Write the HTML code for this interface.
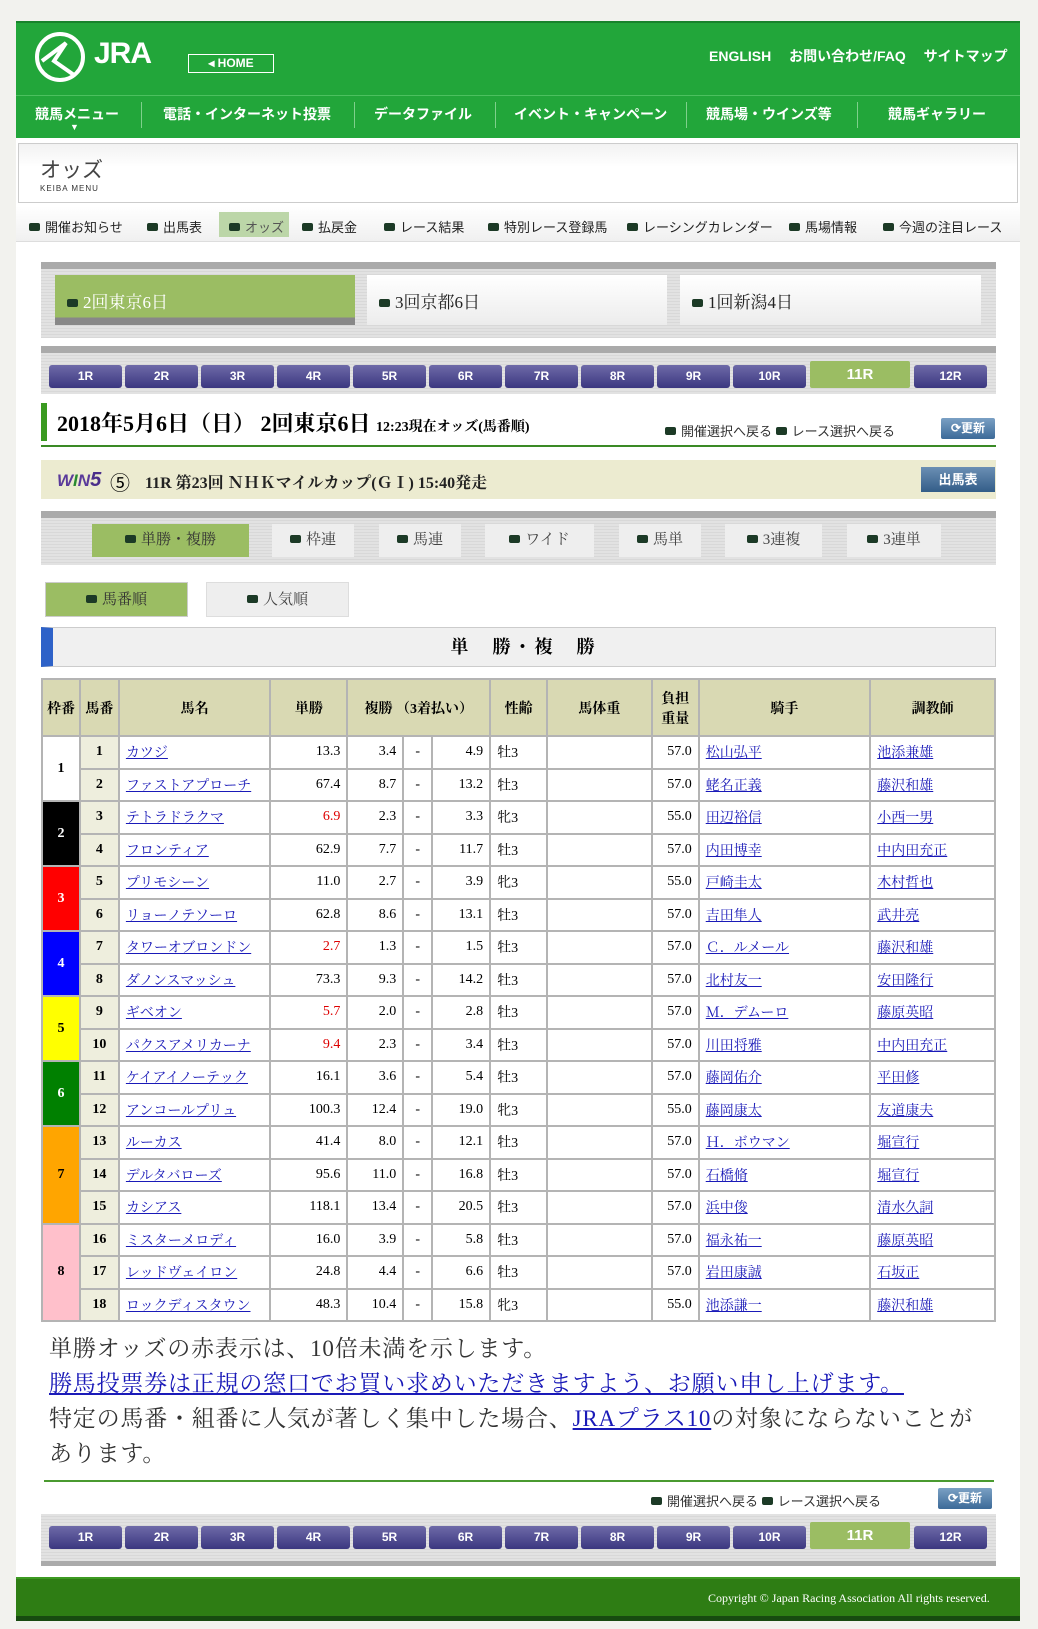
<!DOCTYPE html>
<html><head><meta charset="utf-8">
<style>
*{box-sizing:border-box;margin:0;padding:0}
body{width:1038px;height:1629px;background:#f2f2ee;position:relative;overflow:hidden;font-family:"Liberation Sans","Noto Sans CJK JP",sans-serif}
.abs{position:absolute}
.wrap{position:absolute;left:16px;top:21px;width:1004px;height:1600px;background:#fff}
.hdr{position:absolute;left:16px;top:21px;width:1004px;height:117px;background:#22a63a;border-top:2px solid #17832b}
.hdr .nav{position:absolute;top:72px;left:0;width:100%;height:40px;border-top:1px solid #4cc05f}
.nav span{position:absolute;top:8px;color:#fff;font-weight:bold;font-size:14px}
.sep{position:absolute;top:6px;width:1px;height:26px;background:#7fd08c}
.sub span{position:absolute;top:0;font-size:13px;color:#222;white-space:nowrap}
.sq{display:inline-block;width:11px;height:8px;background:#1c3a26;border-radius:2px;margin-right:5px;vertical-align:1px}
.graybar{position:absolute;left:41px;width:955px;background:repeating-linear-gradient(#e2e2e2 0,#e2e2e2 2px,#d8d8d8 2px,#d8d8d8 3px);border-top:7px solid #aaa}
.mt{position:absolute;top:275px;height:50px;background:linear-gradient(#fff,#ececec);font-family:"Liberation Serif","Noto Serif CJK JP",serif;font-size:17px;padding:13px 0 0 12px;color:#222}
.rt{position:absolute;height:23px;background:linear-gradient(#6e6aa8,#3b3780);color:#fff;font-size:12px;font-weight:bold;text-align:center;line-height:23px;border-radius:3px}
.bt{position:absolute;top:524px;height:33px;background:#eee;font-family:"Liberation Serif","Noto Serif CJK JP",serif;font-size:15px;color:#444;text-align:center;line-height:33px}
.green{background:#9bbd63 !important;color:#333}
table{position:absolute;left:41px;top:678px;width:955px;border-collapse:collapse;font-family:"Liberation Serif","Noto Serif CJK JP",serif;font-size:14px}
td,th{border:2px solid #b4b4b4;height:32.5px;padding:0 6px}
th{background:#d9d9b3;height:57px;font-size:14px}
td.n{text-align:right}
td.c{text-align:center;border-left:none;border-right:none}
td.u{background:#eeeedd;text-align:center;font-weight:bold}
td.w{text-align:center;font-weight:bold}
a{color:#1a1ab8;text-decoration:underline}
.r{color:#d00}
</style></head><body>
<div class="wrap"></div>
<div class="hdr">
 <svg class="abs" style="left:18px;top:8px" width="58" height="52" viewBox="0 0 58 52"><circle cx="26" cy="26" r="23" fill="none" stroke="#fff" stroke-width="4"/><path d="M8 30 L32 12 L20 30 L40 44" fill="none" stroke="#fff" stroke-width="4"/></svg>
 <div class="abs" style="left:78px;top:14px;color:#fff;font-size:30px;font-weight:bold;letter-spacing:-1px">JRA</div>
 <div class="abs" style="left:172px;top:31px;width:86px;height:19px;border:1px solid #fff;color:#fff;font-size:12px;font-weight:bold;text-align:center;line-height:17px">◂ HOME</div>
 <div class="abs" style="left:693px;top:23px;color:#fff;font-size:14px;font-weight:bold;word-spacing:14px">ENGLISH お問い合わせ/FAQ サイトマップ</div>
 <div class="nav">
  <span style="left:19px">競馬メニュー</span><span style="left:54px;top:26px;font-size:9px">▼</span><div class="sep" style="left:125px"></div>
  <span style="left:147px">電話・インターネット投票</span><div class="sep" style="left:338px"></div>
  <span style="left:358px">データファイル</span><div class="sep" style="left:479px"></div>
  <span style="left:498px">イベント・キャンペーン</span><div class="sep" style="left:670px"></div>
  <span style="left:690px">競馬場・ウインズ等</span><div class="sep" style="left:841px"></div>
  <span style="left:872px">競馬ギャラリー</span>
 </div>
</div>
<div class="abs" style="left:18px;top:143px;width:1000px;height:60px;border:1px solid #ccc;background:linear-gradient(#f2f2f2,#fff 40%)">
 <div class="abs" style="left:21px;top:10px;font-size:21px;color:#444">オッズ</div>
 <div class="abs" style="left:21px;top:40px;font-size:8px;color:#333;letter-spacing:1px">KEIBA MENU</div>
</div>
<div class="abs" style="left:16px;top:206px;width:1004px;height:36px;background:linear-gradient(#fff,#f0f0f0);border-bottom:1px solid #ddd"></div>
<div class="abs" style="left:219px;top:212px;width:70px;height:25px;background:#bcd6a8"></div>
<div class="sub abs" style="top:217px;left:0;width:1038px">
 <span style="left:29px"><i class="sq"></i>開催お知らせ</span>
 <span style="left:147px"><i class="sq"></i>出馬表</span>
 <span style="left:229px;color:#555"><i class="sq"></i>オッズ</span>
 <span style="left:302px"><i class="sq"></i>払戻金</span>
 <span style="left:384px"><i class="sq"></i>レース結果</span>
 <span style="left:488px"><i class="sq"></i>特別レース登録馬</span>
 <span style="left:627px"><i class="sq"></i>レーシングカレンダー</span>
 <span style="left:789px"><i class="sq"></i>馬場情報</span>
 <span style="left:883px"><i class="sq"></i>今週の注目レース</span>
</div>
<div class="graybar" style="top:262px;height:76px"></div>
<div class="mt green" style="left:55px;width:300px;background:linear-gradient(#9bbd63 85%,#888 85%)!important;color:#fff"><i class="sq"></i>2回東京6日</div>
<div class="mt" style="left:367px;width:300px"><i class="sq"></i>3回京都6日</div>
<div class="mt" style="left:680px;width:301px"><i class="sq"></i>1回新潟4日</div>
<div class="graybar" style="top:346px;height:48px"></div>
<div id="rt1"></div>
<div class="abs" style="left:41px;top:403px;width:6px;height:38px;background:#3a9a20"></div>
<div class="abs" style="left:57px;top:407px;font-family:'Liberation Serif','Noto Serif CJK JP',serif;font-size:22px;font-weight:bold;white-space:nowrap">2018年5月6日（日） 2回東京6日 <span style="font-size:14px">12:23現在オッズ(馬番順)</span></div>
<div class="abs" style="left:41px;top:445px;width:955px;height:2px;background:#3a8a25"></div>
<div class="abs" style="left:665px;top:421px;font-size:13px;color:#333;white-space:nowrap"><i class="sq"></i>開催選択へ戻る <i class="sq"></i>レース選択へ戻る</div>
<div class="abs" style="left:941px;top:418px;width:54px;height:21px;background:linear-gradient(#7aa0c4,#3c6a98);color:#fff;font-size:12px;font-weight:bold;text-align:center;line-height:21px;border-radius:2px">⟳更新</div>
<div class="abs" style="left:41px;top:460px;width:955px;height:39px;background:#ecebd0"></div>
<div class="abs" style="left:57px;top:469px;font-size:17px;font-weight:bold;font-style:italic;color:#5a3a9a">W<span style="color:#2a8a30">I</span>N<span style="font-size:20px;color:#4a2e8a">5</span></div>
<div class="abs" style="left:110px;top:467px;font-size:20px">⑤</div>
<div class="abs" style="left:145px;top:470px;font-family:'Liberation Serif','Noto Serif CJK JP',serif;font-size:16px;font-weight:bold;white-space:nowrap;color:#222">11R 第23回 ＮＨＫマイルカップ(ＧⅠ) 15:40発走</div>
<div class="abs" style="left:921px;top:467px;width:74px;height:25px;background:linear-gradient(#6b8fb4,#335d88);color:#fff;font-size:13px;font-weight:bold;text-align:center;line-height:25px">出馬表</div>
<div class="graybar" style="top:511px;height:54px"></div>
<div class="bt green" style="left:92px;width:157px"><i class="sq"></i>単勝・複勝</div>
<div class="bt" style="left:272px;width:82px"><i class="sq"></i>枠連</div>
<div class="bt" style="left:379px;width:82px"><i class="sq"></i>馬連</div>
<div class="bt" style="left:485px;width:109px"><i class="sq"></i>ワイド</div>
<div class="bt" style="left:619px;width:82px"><i class="sq"></i>馬単</div>
<div class="bt" style="left:725px;width:97px"><i class="sq"></i>3連複</div>
<div class="bt" style="left:847px;width:94px"><i class="sq"></i>3連単</div>
<div class="bt green" style="left:45px;top:582px;width:143px;height:35px;line-height:35px;border:1px solid #ccc"><i class="sq"></i>馬番順</div>
<div class="bt" style="left:206px;top:582px;width:143px;height:35px;line-height:35px;border:1px solid #ddd"><i class="sq"></i>人気順</div>
<div class="abs" style="left:41px;top:627px;width:955px;height:40px;background:#f0f0f0;border:1px solid #ccc;border-left:12px solid #2e62c8;text-align:center;line-height:38px;font-family:'Liberation Serif','Noto Serif CJK JP',serif;font-size:18px;font-weight:bold;letter-spacing:3px">単　勝・複　勝</div>
<table>
<colgroup><col style="width:38px"><col style="width:39px"><col style="width:152px"><col style="width:77px"><col style="width:56px"><col style="width:29px"><col style="width:58px"><col style="width:57px"><col style="width:105px"><col style="width:47px"><col style="width:172px"><col style="width:125px"></colgroup>
<tr><th style="padding:0">枠番</th><th style="padding:0">馬番</th><th>馬名</th><th>単勝</th><th colspan="3">複勝 （3着払い）</th><th>性齢</th><th>馬体重</th><th style="padding:0">負担<br>重量</th><th>騎手</th><th>調教師</th></tr>
<tr><td class="w" rowspan="2">1</td><td class="u">1</td><td><a>カツジ</a></td><td class="n">13.3</td><td class="n">3.4</td><td class="c">-</td><td class="n">4.9</td><td>牡3</td><td></td><td class="n">57.0</td><td><a>松山弘平</a></td><td><a>池添兼雄</a></td></tr>
<tr><td class="u">2</td><td><a>ファストアプローチ</a></td><td class="n">67.4</td><td class="n">8.7</td><td class="c">-</td><td class="n">13.2</td><td>牡3</td><td></td><td class="n">57.0</td><td><a>蛯名正義</a></td><td><a>藤沢和雄</a></td></tr>
<tr><td class="w" rowspan="2" style="background:#000;color:#fff">2</td><td class="u">3</td><td><a>テトラドラクマ</a></td><td class="n r">6.9</td><td class="n">2.3</td><td class="c">-</td><td class="n">3.3</td><td>牝3</td><td></td><td class="n">55.0</td><td><a>田辺裕信</a></td><td><a>小西一男</a></td></tr>
<tr><td class="u">4</td><td><a>フロンティア</a></td><td class="n">62.9</td><td class="n">7.7</td><td class="c">-</td><td class="n">11.7</td><td>牡3</td><td></td><td class="n">57.0</td><td><a>内田博幸</a></td><td><a>中内田充正</a></td></tr>
<tr><td class="w" rowspan="2" style="background:#f00;color:#fff">3</td><td class="u">5</td><td><a>プリモシーン</a></td><td class="n">11.0</td><td class="n">2.7</td><td class="c">-</td><td class="n">3.9</td><td>牝3</td><td></td><td class="n">55.0</td><td><a>戸崎圭太</a></td><td><a>木村哲也</a></td></tr>
<tr><td class="u">6</td><td><a>リョーノテソーロ</a></td><td class="n">62.8</td><td class="n">8.6</td><td class="c">-</td><td class="n">13.1</td><td>牡3</td><td></td><td class="n">57.0</td><td><a>吉田隼人</a></td><td><a>武井亮</a></td></tr>
<tr><td class="w" rowspan="2" style="background:#00f;color:#fff">4</td><td class="u">7</td><td><a>タワーオブロンドン</a></td><td class="n r">2.7</td><td class="n">1.3</td><td class="c">-</td><td class="n">1.5</td><td>牡3</td><td></td><td class="n">57.0</td><td><a>Ｃ．ルメール</a></td><td><a>藤沢和雄</a></td></tr>
<tr><td class="u">8</td><td><a>ダノンスマッシュ</a></td><td class="n">73.3</td><td class="n">9.3</td><td class="c">-</td><td class="n">14.2</td><td>牡3</td><td></td><td class="n">57.0</td><td><a>北村友一</a></td><td><a>安田隆行</a></td></tr>
<tr><td class="w" rowspan="2" style="background:#ff0">5</td><td class="u">9</td><td><a>ギベオン</a></td><td class="n r">5.7</td><td class="n">2.0</td><td class="c">-</td><td class="n">2.8</td><td>牡3</td><td></td><td class="n">57.0</td><td><a>Ｍ．デムーロ</a></td><td><a>藤原英昭</a></td></tr>
<tr><td class="u">10</td><td><a>パクスアメリカーナ</a></td><td class="n r">9.4</td><td class="n">2.3</td><td class="c">-</td><td class="n">3.4</td><td>牡3</td><td></td><td class="n">57.0</td><td><a>川田将雅</a></td><td><a>中内田充正</a></td></tr>
<tr><td class="w" rowspan="2" style="background:#008000;color:#fff">6</td><td class="u">11</td><td><a>ケイアイノーテック</a></td><td class="n">16.1</td><td class="n">3.6</td><td class="c">-</td><td class="n">5.4</td><td>牡3</td><td></td><td class="n">57.0</td><td><a>藤岡佑介</a></td><td><a>平田修</a></td></tr>
<tr><td class="u">12</td><td><a>アンコールプリュ</a></td><td class="n">100.3</td><td class="n">12.4</td><td class="c">-</td><td class="n">19.0</td><td>牝3</td><td></td><td class="n">55.0</td><td><a>藤岡康太</a></td><td><a>友道康夫</a></td></tr>
<tr><td class="w" rowspan="3" style="background:#ffa500">7</td><td class="u">13</td><td><a>ルーカス</a></td><td class="n">41.4</td><td class="n">8.0</td><td class="c">-</td><td class="n">12.1</td><td>牡3</td><td></td><td class="n">57.0</td><td><a>Ｈ．ボウマン</a></td><td><a>堀宣行</a></td></tr>
<tr><td class="u">14</td><td><a>デルタバローズ</a></td><td class="n">95.6</td><td class="n">11.0</td><td class="c">-</td><td class="n">16.8</td><td>牡3</td><td></td><td class="n">57.0</td><td><a>石橋脩</a></td><td><a>堀宣行</a></td></tr>
<tr><td class="u">15</td><td><a>カシアス</a></td><td class="n">118.1</td><td class="n">13.4</td><td class="c">-</td><td class="n">20.5</td><td>牡3</td><td></td><td class="n">57.0</td><td><a>浜中俊</a></td><td><a>清水久詞</a></td></tr>
<tr><td class="w" rowspan="3" style="background:#ffc0cb">8</td><td class="u">16</td><td><a>ミスターメロディ</a></td><td class="n">16.0</td><td class="n">3.9</td><td class="c">-</td><td class="n">5.8</td><td>牡3</td><td></td><td class="n">57.0</td><td><a>福永祐一</a></td><td><a>藤原英昭</a></td></tr>
<tr><td class="u">17</td><td><a>レッドヴェイロン</a></td><td class="n">24.8</td><td class="n">4.4</td><td class="c">-</td><td class="n">6.6</td><td>牡3</td><td></td><td class="n">57.0</td><td><a>岩田康誠</a></td><td><a>石坂正</a></td></tr>
<tr><td class="u">18</td><td><a>ロックディスタウン</a></td><td class="n">48.3</td><td class="n">10.4</td><td class="c">-</td><td class="n">15.8</td><td>牝3</td><td></td><td class="n">55.0</td><td><a>池添謙一</a></td><td><a>藤沢和雄</a></td></tr>
</table>
<div class="abs" style="left:49px;top:1331px;width:945px;font-family:'Liberation Serif','Noto Serif CJK JP',serif;font-size:23px;line-height:35px;color:#333;letter-spacing:0.8px">
単勝オッズの赤表示は、10倍未満を示します。<br><a>勝馬投票券は正規の窓口でお買い求めいただきますよう、お願い申し上げます。</a><br>特定の馬番・組番に人気が著しく集中した場合、<a>JRAプラス10</a>の対象にならないことが<br>あります。
</div>
<div class="abs" style="left:44px;top:1480px;width:950px;height:2px;background:#4a9a30"></div>
<div class="abs" style="left:651px;top:1491px;font-size:13px;color:#333;white-space:nowrap"><i class="sq"></i>開催選択へ戻る <i class="sq"></i>レース選択へ戻る</div>
<div class="abs" style="left:938px;top:1488px;width:54px;height:21px;background:linear-gradient(#7aa0c4,#3c6a98);color:#fff;font-size:12px;font-weight:bold;text-align:center;line-height:21px;border-radius:2px">⟳更新</div>
<div class="graybar" style="top:1514px;height:52px;border-top:none;border-bottom:5px solid #aaa"></div>
<div id="rt2"></div>
<div class="abs" style="left:16px;top:1577px;width:1004px;height:44px;background:#2e7d14;border-top:2px solid #3d9a22;border-bottom:5px solid #174a10"></div>
<div class="abs" style="left:708px;top:1591px;color:#fff;font-family:'Liberation Serif',serif;font-size:12px;white-space:nowrap">Copyright © Japan Racing Association All rights reserved.</div>
<script>
function tabs(id,top){var h='';var x=49;for(var i=1;i<=12;i++){if(i==11){h+='<div class="rt green" style="left:810px;top:'+(top-4)+'px;width:100px;height:27px;line-height:27px;font-size:15px;color:#fff;border-radius:2px">11R</div>';x=914;continue;}h+='<div class="rt" style="left:'+x+'px;top:'+top+'px;width:73px">'+i+'R</div>';x+=76;}document.getElementById(id).outerHTML=h;}
tabs('rt1',365);tabs('rt2',1526);
</script>
</body></html>
